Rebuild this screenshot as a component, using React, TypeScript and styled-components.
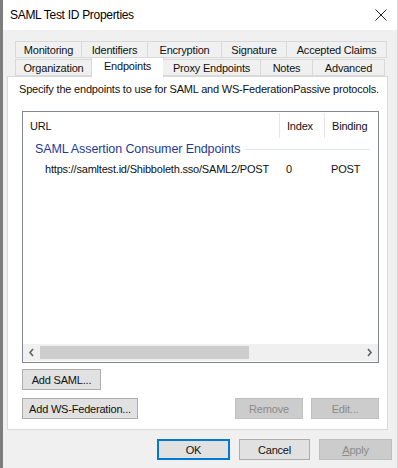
import React from 'react';
import styled, {createGlobalStyle} from 'styled-components';

const GlobalStyle = createGlobalStyle`
  html, body {
    margin: 0;
    padding: 0;
    background: #f0f0f0;
  }
  body {
    font-family: 'Liberation Sans', Arial, sans-serif;
    font-size: 11px;
    letter-spacing: -0.2px;
    color: #111;
  }
`;

const ROW1 = [
  {label: 'Monitoring', width: 67},
  {label: 'Identifiers', width: 66},
  {label: 'Encryption', width: 74},
  {label: 'Signature', width: 65},
  {label: 'Accepted Claims', width: 100},
];

const ROW2 = [
  {label: 'Organization', width: 77},
  {label: 'Endpoints', width: 73, selected: true},
  {label: 'Proxy Endpoints', width: 98},
  {label: 'Notes', width: 52},
  {label: 'Advanced', width: 72},
];

const Window = styled.div`
  width: 398px;
  height: 468px;
  box-sizing: border-box;
  border-left: 3px solid #7d7d7d;
  border-right: 1px solid #d4d4d4;
  display: flex;
  flex-direction: column;
  background: #f0f0f0;
  overflow: hidden;
`;

const TitleBar = styled.div`
  height: 30px;
  background: #fff;
  display: flex;
  align-items: center;
  justify-content: space-between;
  padding: 0 10px 0 7px;
  font-size: 12px;
  letter-spacing: -0.3px;
  color: #000;
`;

const CloseIcon = styled.svg`
  width: 12px;
  height: 12px;
`;

const Body = styled.div`
  padding: 11px 0 0 4px;
  display: flex;
  flex-direction: column;
`;

const TabRow = styled.div<{$front?: boolean}>`
  display: flex;
  margin-left: 8px;
  height: ${(p) => (p.$front ? 18 : 17)}px;
  align-items: flex-end;
  position: relative;
  z-index: ${(p) => (p.$front ? 2 : 1)};
`;

const Tab = styled.div<{$width: number; $selected?: boolean}>`
  width: ${(p) => p.$width}px;
  height: ${(p) => (p.$selected ? 21 : 17)}px;
  box-sizing: border-box;
  border: 1px solid #d9d9d9;
  border-left-width: 0;
  &:first-child {
    border-left-width: 1px;
  }
  border-bottom-color: ${(p) => (p.$selected ? '#fff' : '#d9d9d9')};
  background: ${(p) => (p.$selected ? '#fff' : '#f0f0f0')};
  display: flex;
  align-items: center;
  justify-content: center;
  padding-bottom: ${(p) => (p.$selected ? 3 : 0)}px;
  margin-bottom: ${(p) => (p.$selected ? -2 : 0)}px;
  ${(p) => (p.$selected ? 'border-left-width: 1px; margin-left: -1px; margin-right: -1px;' : '')}
  white-space: nowrap;
  color: #111;
`;

const Panel = styled.div`
  width: 381px;
  height: 354px;
  box-sizing: border-box;
  background: #fff;
  border: 1px solid #d9d9d9;
  padding: 5px 8px 0 14px;
  display: flex;
  flex-direction: column;
`;

const Description = styled.div`
  margin-left: -3px;
  height: 15px;
  line-height: 15px;
  white-space: nowrap;
`;

const ListBox = styled.div`
  margin-top: 14px;
  width: 357px;
  height: 252px;
  box-sizing: border-box;
  border: 1px solid #828790;
  background: #fff;
  display: flex;
  flex-direction: column;
`;

const Grid = styled.div`
  display: grid;
  grid-template-columns: 256px 45px 1fr;
  align-items: center;
`;

const HeaderCell = styled.div<{$divider?: boolean}>`
  height: 25px;
  margin: 1px 0;
  padding-left: 7px;
  display: flex;
  align-items: center;
  border-left: ${(p) => (p.$divider ? '1px solid #e5e5e5' : 'none')};
  color: #111;
`;

const GroupHeader = styled.div`
  display: flex;
  align-items: center;
  gap: 5px;
  height: 20px;
  padding: 0 8px 0 12px;
  color: #1e3a94;
  font-size: 12.5px;
  letter-spacing: -0.1px;
  &::after {
    content: '';
    flex: 1;
    height: 1px;
    background: #dfe4f1;
  }
`;

const Cell = styled.div<{$indent?: number}>`
  height: 20px;
  display: flex;
  align-items: center;
  padding-left: ${(p) => p.$indent ?? 7}px;
  white-space: nowrap;
`;

const Spacer = styled.div`
  flex: 1;
`;

const ScrollBar = styled.div`
  height: 17px;
  margin: 0 0 1px;
  background: #f0f0f0;
  display: flex;
  align-items: center;
`;

const ScrollArrow = styled.div`
  width: 17px;
  height: 17px;
  display: flex;
  align-items: center;
  justify-content: center;
`;

const ScrollTrack = styled.div`
  flex: 1;
  height: 13px;
  display: flex;
`;

const Thumb = styled.div`
  background: #cdcdcd;
  height: 100%;
`;

const ButtonRow = styled.div<{$top: number}>`
  display: flex;
  gap: 8px;
  margin-top: ${(p) => p.$top}px;
`;

const Button = styled.button<{$width: number; $disabled?: boolean; $default?: boolean}>`
  width: ${(p) => p.$width}px;
  height: 21px;
  box-sizing: border-box;
  font-family: inherit;
  font-size: 11px;
  letter-spacing: -0.2px;
  padding: 0;
  background: ${(p) => (p.$disabled ? '#cccccc' : '#e1e1e1')};
  border: ${(p) =>
    p.$default ? '2px solid #0078d7' : p.$disabled ? '1px solid #bfbfbf' : '1px solid #adadad'};
  color: ${(p) => (p.$disabled ? '#8b8b8b' : '#111')};
  display: flex;
  align-items: center;
  justify-content: center;
`;

const Footer = styled.div`
  display: flex;
  justify-content: flex-end;
  gap: 9px;
  padding: 9px 5px 0 0;
`;

const Chevron: React.FC<{dir: 'left' | 'right'}> = ({dir}) => (
  <svg width="7" height="9" viewBox="0 0 7 9">
    <path
      d={dir === 'left' ? 'M5 1 L2 4.5 L5 8' : 'M2 1 L5 4.5 L2 8'}
      stroke="#606060"
      strokeWidth="1.6"
      fill="none"
    />
  </svg>
);

const App: React.FC = () => {
  return (
    <>
      <GlobalStyle />
      <Window>
        <TitleBar>
          <span>SAML Test ID Properties</span>
          <CloseIcon viewBox="0 0 12 12">
            <path d="M0.5 0.5 L11.5 11.5 M11.5 0.5 L0.5 11.5" stroke="#222" strokeWidth="1" />
          </CloseIcon>
        </TitleBar>
        <Body>
          <TabRow>
            {ROW1.map((t) => (
              <Tab key={t.label} $width={t.width}>
                {t.label}
              </Tab>
            ))}
          </TabRow>
          <TabRow $front>
            {ROW2.map((t) => (
              <Tab key={t.label} $width={t.width} $selected={t.selected}>
                {t.label}
              </Tab>
            ))}
          </TabRow>
          <Panel>
            <Description>
              Specify the endpoints to use for SAML and WS-FederationPassive protocols.
            </Description>
            <ListBox>
              <Grid>
                <HeaderCell>URL</HeaderCell>
                <HeaderCell $divider>Index</HeaderCell>
                <HeaderCell $divider>Binding</HeaderCell>
              </Grid>
              <GroupHeader>SAML Assertion Consumer Endpoints</GroupHeader>
              <Grid>
                <Cell $indent={22}>https://samltest.id/Shibboleth.sso/SAML2/POST</Cell>
                <Cell>0</Cell>
                <Cell>POST</Cell>
              </Grid>
              <Spacer />
              <ScrollBar>
                <ScrollArrow>
                  <Chevron dir="left" />
                </ScrollArrow>
                <ScrollTrack>
                  <Thumb style={{width: `${(209 / 321) * 100}%`}} />
                </ScrollTrack>
                <ScrollArrow>
                  <Chevron dir="right" />
                </ScrollArrow>
              </ScrollBar>
            </ListBox>
            <ButtonRow $top={6}>
              <Button $width={79}>Add SAML...</Button>
            </ButtonRow>
            <ButtonRow $top={8}>
              <Button $width={116}>Add WS-Federation...</Button>
              <Spacer />
              <Button $width={68} $disabled>
                Remove
              </Button>
              <Button $width={68} $disabled>
                Edit...
              </Button>
            </ButtonRow>
          </Panel>
          <Footer>
            <Button $width={73} $default>
              OK
            </Button>
            <Button $width={71}>Cancel</Button>
            <Button $width={73} $disabled>
              <u>A</u>pply
            </Button>
          </Footer>
        </Body>
      </Window>
    </>
  );
};

export default App;
